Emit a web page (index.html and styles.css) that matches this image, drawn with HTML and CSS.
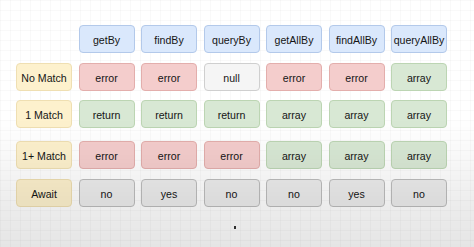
FILE: index.html
```html
<!DOCTYPE html>
<html>
<head>
<meta charset="utf-8">
<link rel="stylesheet" href="styles.css">
</head>
<body>
<div class="table">
  <div class="row">
    <div class="cell empty"></div>
    <div class="cell blue">getBy</div>
    <div class="cell blue">findBy</div>
    <div class="cell blue">queryBy</div>
    <div class="cell blue">getAllBy</div>
    <div class="cell blue">findAllBy</div>
    <div class="cell blue">queryAllBy</div>
  </div>
  <div class="row">
    <div class="cell yellow">No Match</div>
    <div class="cell red">error</div>
    <div class="cell red">error</div>
    <div class="cell light">null</div>
    <div class="cell red">error</div>
    <div class="cell red">error</div>
    <div class="cell green">array</div>
  </div>
  <div class="row tight">
    <div class="cell yellow">1 Match</div>
    <div class="cell green">return</div>
    <div class="cell green">return</div>
    <div class="cell green">return</div>
    <div class="cell green">array</div>
    <div class="cell green">array</div>
    <div class="cell green">array</div>
  </div>
  <div class="row spaced">
    <div class="cell yellow">1+ Match</div>
    <div class="cell red">error</div>
    <div class="cell red">error</div>
    <div class="cell red">error</div>
    <div class="cell green">array</div>
    <div class="cell green">array</div>
    <div class="cell green">array</div>
  </div>
  <div class="row">
    <div class="cell yellow">Await</div>
    <div class="cell gray">no</div>
    <div class="cell gray">yes</div>
    <div class="cell gray">no</div>
    <div class="cell gray">no</div>
    <div class="cell gray">yes</div>
    <div class="cell gray">no</div>
  </div>
</div>
<div class="cursor"></div>
</body>
</html>
```
FILE: styles.css
```css
html, body {
  margin: 0;
  height: 100%;
}
body {
  position: relative;
  overflow: hidden;
  font-family: "Liberation Sans", Arial, sans-serif;
  font-size: 10.6px;
  color: #151515;
  background-color: #fff;
  background-image:
    linear-gradient(to right, rgba(0,0,0,0.022) 1px, transparent 1px),
    linear-gradient(to bottom, rgba(0,0,0,0.022) 1px, transparent 1px);
  background-size: 10px 10px;
}
body::after {
  content: "";
  position: fixed;
  inset: 0;
  pointer-events: none;
  background: linear-gradient(to bottom, rgba(0,0,0,0) 0%, rgba(0,0,0,0) 48%, rgba(0,0,0,0.025) 62%, rgba(0,0,0,0.065) 80%, rgba(0,0,0,0.1) 100%);
}
.table {
  display: flex;
  flex-direction: column;
  gap: 10px;
  padding: 25px 0 0 16px;
}
.row {
  display: flex;
  gap: 6.5px;
}
.row.tight { margin-top: -1px; }
.row.spaced { margin-top: 3px; }
.cell {
  box-sizing: border-box;
  width: 56px;
  height: 28px;
  padding-top: 1px;
  border: 1px solid;
  border-radius: 4px;
  display: flex;
  align-items: center;
  justify-content: center;
  white-space: nowrap;
}
.empty { border-color: transparent; }
.blue { background: #dae8fc; border-color: #b3c9ea; }
.red { background: #f4cdcc; border-color: #e3aeac; }
.green { background: #d8e8d4; border-color: #bcd5b3; }
.yellow { background: #fdf1cd; border-color: #efdfb2; }
.light { background: #f5f5f5; border-color: #cfcfcf; }
.gray { background: #ececec; border-color: #bdbdbd; }
.cursor {
  position: absolute;
  left: 234px;
  top: 226px;
  width: 2px;
  height: 3px;
  background: #333;
}
```
